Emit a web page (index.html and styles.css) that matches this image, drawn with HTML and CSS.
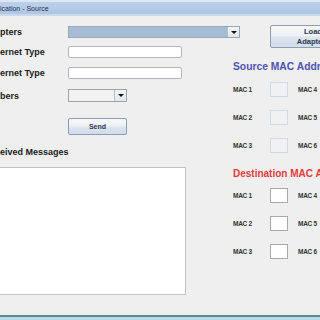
FILE: index.html
```html
<!DOCTYPE html>
<html>
<head>
<meta charset="utf-8">
<link rel="stylesheet" href="styles.css">
</head>
<body>
<div class="window">
  <div class="titlebar"><span class="title">ication - Source</span></div>
  <div class="main">
    <div class="left">
      <div class="row r1">
        <span class="label">pters</span>
        <div class="combo combo-wide"><div class="combo-value sel"></div><div class="combo-arrow"><span class="tri"></span></div></div>
      </div>
      <div class="row r2">
        <span class="label">ernet Type</span>
        <div class="textfield"></div>
      </div>
      <div class="row r3">
        <span class="label">ernet Type</span>
        <div class="textfield"></div>
      </div>
      <div class="row r4">
        <span class="label">bers</span>
        <div class="combo combo-small"><div class="combo-value"></div><div class="combo-arrow"><span class="tri"></span></div></div>
      </div>
      <div class="send-wrap"><button class="btn send">Send</button></div>
      <div class="label recv">eived Messages</div>
      <div class="textarea"></div>
    </div>
    <div class="right">
      <button class="btn load">Load<br>Adapters</button>
      <div class="section-title src">Source MAC Address</div>
      <div class="mac-row first">
        <span class="mac-label">MAC 1</span><span class="mac-box dis"></span><span class="mac-label">MAC 4</span>
      </div>
      <div class="mac-row">
        <span class="mac-label">MAC 2</span><span class="mac-box dis"></span><span class="mac-label">MAC 5</span>
      </div>
      <div class="mac-row">
        <span class="mac-label">MAC 3</span><span class="mac-box dis"></span><span class="mac-label">MAC 6</span>
      </div>
      <div class="section-title dst">Destination MAC Address</div>
      <div class="mac-row first">
        <span class="mac-label">MAC 1</span><span class="mac-box"></span><span class="mac-label">MAC 4</span>
      </div>
      <div class="mac-row">
        <span class="mac-label">MAC 2</span><span class="mac-box"></span><span class="mac-label">MAC 5</span>
      </div>
      <div class="mac-row">
        <span class="mac-label">MAC 3</span><span class="mac-box"></span><span class="mac-label">MAC 6</span>
      </div>
    </div>
  </div>
  <div class="frame-bottom"></div>
</div>
</body>
</html>
```
FILE: styles.css
```css
html, body {
  margin: 0;
  padding: 0;
}
body {
  width: 320px;
  height: 320px;
  overflow: hidden;
  background: #efefef;
  font-family: "Liberation Sans", Arial, sans-serif;
  color: #1c1c1c;
}
.window {
  display: flex;
  flex-direction: column;
  height: 320px;
}
.titlebar {
  height: 16px;
  box-sizing: border-box;
  border-top: 2px solid #dce7f3;
  border-bottom: 2px solid #cbd9ea;
  background: linear-gradient(#bcd0ea, #aec6e4);
  display: flex;
  align-items: center;
}
.title {
  font-size: 7px;
  color: #1e3050;
  line-height: 1;
}
.main {
  flex: 1;
  display: grid;
  grid-template-columns: 233px 1fr;
  min-height: 0;
}
.left {
  display: flex;
  flex-direction: column;
}
.row {
  display: flex;
  align-items: center;
}
.label {
  width: 68px;
  flex: none;
  font-size: 9px;
  font-weight: bold;
  color: #1a1a1a;
  white-space: nowrap;
}
.r1 { margin-top: 10px; height: 12px; }
.r2 { margin-top: 8px; height: 12px; }
.r3 { margin-top: 9px; height: 12px; }
.r4 { margin-top: 10px; height: 13px; }
.combo {
  display: flex;
  box-sizing: border-box;
  height: 100%;
  border: 1px solid #9aa6b6;
  flex: none;
}
.combo-wide {
  width: 172px;
}
.combo-small {
  width: 59px;
  border-color: #a3a3a3;
}
.combo-value {
  flex: 1;
  background: #f2f2f2;
}
.combo-value.sel {
  background: #a7bbd4;
}
.combo-arrow {
  width: 11px;
  background: linear-gradient(#f4f4f4, #e2e6ec);
  border-left: 1px solid #b4bcc8;
  display: flex;
  align-items: center;
  justify-content: center;
}
.tri {
  width: 0;
  height: 0;
  border-left: 3px solid transparent;
  border-right: 3px solid transparent;
  border-top: 3px solid #111;
}
.textfield {
  width: 114px;
  flex: none;
  height: 100%;
  box-sizing: border-box;
  background: #fff;
  border: 1px solid #b3b6bc;
  border-radius: 2px;
}
.btn {
  font-family: "Liberation Sans", Arial, sans-serif;
  font-weight: bold;
  color: #2b3550;
  background: linear-gradient(#f7f7f7 0%, #eef1f5 45%, #dbe4ef 55%, #d3deeb 100%);
  border: 1px solid #8b9db5;
  border-radius: 2px;
  padding: 0;
  box-sizing: border-box;
  cursor: default;
}
.send-wrap {
  margin-top: 16px;
  padding-left: 68px;
  display: flex;
}
.send {
  width: 59px;
  height: 17px;
  font-size: 7px;
}
.recv {
  margin-top: 12px;
  line-height: 10px;
  width: auto;
}
.textarea {
  margin-top: 10px;
  margin-left: -1px;
  width: 187px;
  height: 128px;
  box-sizing: border-box;
  background: #fff;
  border: 1px solid #c2c2c6;
}
.right {
  display: flex;
  flex-direction: column;
  min-width: 0;
}
.load {
  margin-top: 9px;
  margin-left: 37px;
  width: 86px;
  height: 23px;
  font-size: 7.5px;
  line-height: 10px;
  flex: none;
  white-space: nowrap;
}
.section-title {
  font-size: 10px;
  font-weight: bold;
  line-height: 12px;
  white-space: nowrap;
}
.src {
  margin-top: 13px;
  font-size: 10.3px;
  color: #5152b2;
}
.dst {
  margin-top: 15px;
  color: #e5393e;
}
.mac-row {
  display: flex;
  align-items: center;
  height: 15px;
  margin-top: 13px;
  white-space: nowrap;
}
.mac-row.first {
  margin-top: 9px;
}
.dst + .mac-row.first {
  margin-top: 8px;
}
.mac-label {
  font-size: 6.5px;
  font-weight: bold;
  letter-spacing: -0.25px;
  color: #333;
  width: 37px;
  flex: none;
}
.mac-box {
  width: 18px;
  height: 15px;
  box-sizing: border-box;
  background: #fff;
  border: 1px solid #a9a9ad;
  margin-right: 10px;
  flex: none;
}
.mac-box.dis {
  background: #f0f1f3;
  border-color: #d3d9e2;
}
.frame-bottom {
  height: 5px;
  box-sizing: border-box;
  border-top: 2px solid #5d8a94;
  background: #b5dbe4;
  flex: none;
}
```
